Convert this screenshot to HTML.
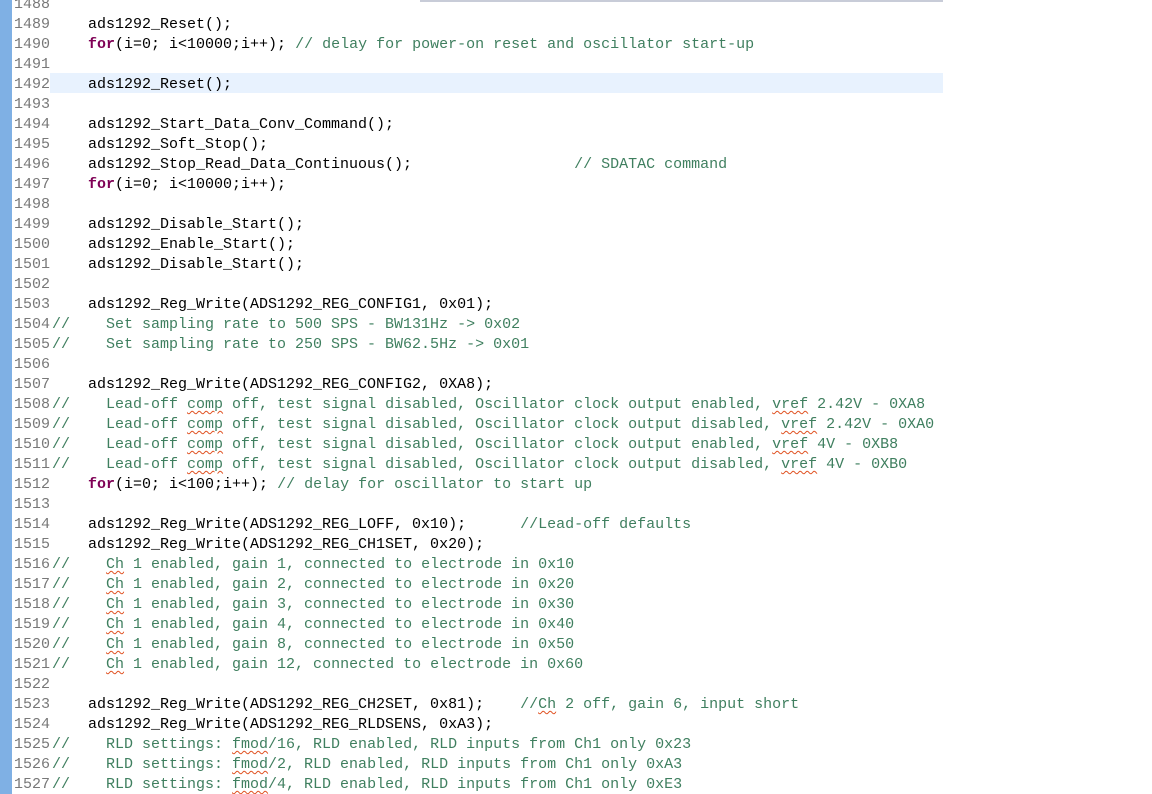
<!DOCTYPE html>
<html><head><meta charset="utf-8"><style>
html,body{margin:0;padding:0;background:#fff;width:1152px;height:794px;overflow:hidden;position:relative}
.bar{position:absolute;left:0;top:0;width:12px;height:794px;background:#7fb0e4}
.topl{position:absolute;left:420px;top:0;width:523px;height:2px;background:#c8ccd8}
.hl{position:absolute;left:50px;top:73px;width:893px;height:20px;background:#e8f2fe}
.l{position:absolute;left:0;height:20px;line-height:20px;font-family:"Liberation Mono",monospace;font-size:15px;white-space:pre;color:#000}
.n{position:absolute;left:12px;width:38px;text-align:right;color:#787878}
.c{position:absolute;left:52px}
.k{color:#7f0055;font-weight:bold}
.m{color:#3f7f5f}
.s{text-decoration:underline wavy #e05020;text-decoration-thickness:1px;text-underline-offset:2px}
</style></head><body>
<div class="bar"></div><div class="topl"></div><div class="hl"></div>
<div class="l" style="top:-5px"><span class="n">1488</span></div>
<div class="l" style="top:15px"><span class="n">1489</span><span class="c">    ads1292_Reset();</span></div>
<div class="l" style="top:35px"><span class="n">1490</span><span class="c">    <span class="k">for</span>(i=0; i&lt;10000;i++); <span class="m">// delay for power-on reset and oscillator start-up</span></span></div>
<div class="l" style="top:55px"><span class="n">1491</span></div>
<div class="l" style="top:75px"><span class="n">1492</span><span class="c">    ads1292_Reset();</span></div>
<div class="l" style="top:95px"><span class="n">1493</span></div>
<div class="l" style="top:115px"><span class="n">1494</span><span class="c">    ads1292_Start_Data_Conv_Command();</span></div>
<div class="l" style="top:135px"><span class="n">1495</span><span class="c">    ads1292_Soft_Stop();</span></div>
<div class="l" style="top:155px"><span class="n">1496</span><span class="c">    ads1292_Stop_Read_Data_Continuous();                  <span class="m">// SDATAC command</span></span></div>
<div class="l" style="top:175px"><span class="n">1497</span><span class="c">    <span class="k">for</span>(i=0; i&lt;10000;i++);</span></div>
<div class="l" style="top:195px"><span class="n">1498</span></div>
<div class="l" style="top:215px"><span class="n">1499</span><span class="c">    ads1292_Disable_Start();</span></div>
<div class="l" style="top:235px"><span class="n">1500</span><span class="c">    ads1292_Enable_Start();</span></div>
<div class="l" style="top:255px"><span class="n">1501</span><span class="c">    ads1292_Disable_Start();</span></div>
<div class="l" style="top:275px"><span class="n">1502</span></div>
<div class="l" style="top:295px"><span class="n">1503</span><span class="c">    ads1292_Reg_Write(ADS1292_REG_CONFIG1, 0x01);</span></div>
<div class="l" style="top:315px"><span class="n">1504</span><span class="c m">//    Set sampling rate to 500 SPS - BW131Hz -&gt; 0x02</span></div>
<div class="l" style="top:335px"><span class="n">1505</span><span class="c m">//    Set sampling rate to 250 SPS - BW62.5Hz -&gt; 0x01</span></div>
<div class="l" style="top:355px"><span class="n">1506</span></div>
<div class="l" style="top:375px"><span class="n">1507</span><span class="c">    ads1292_Reg_Write(ADS1292_REG_CONFIG2, 0XA8);</span></div>
<div class="l" style="top:395px"><span class="n">1508</span><span class="c m">//    Lead-off <span class="s">comp</span> off, test signal disabled, Oscillator clock output enabled, <span class="s">vref</span> 2.42V - 0XA8</span></div>
<div class="l" style="top:415px"><span class="n">1509</span><span class="c m">//    Lead-off <span class="s">comp</span> off, test signal disabled, Oscillator clock output disabled, <span class="s">vref</span> 2.42V - 0XA0</span></div>
<div class="l" style="top:435px"><span class="n">1510</span><span class="c m">//    Lead-off <span class="s">comp</span> off, test signal disabled, Oscillator clock output enabled, <span class="s">vref</span> 4V - 0XB8</span></div>
<div class="l" style="top:455px"><span class="n">1511</span><span class="c m">//    Lead-off <span class="s">comp</span> off, test signal disabled, Oscillator clock output disabled, <span class="s">vref</span> 4V - 0XB0</span></div>
<div class="l" style="top:475px"><span class="n">1512</span><span class="c">    <span class="k">for</span>(i=0; i&lt;100;i++); <span class="m">// delay for oscillator to start up</span></span></div>
<div class="l" style="top:495px"><span class="n">1513</span></div>
<div class="l" style="top:515px"><span class="n">1514</span><span class="c">    ads1292_Reg_Write(ADS1292_REG_LOFF, 0x10);      <span class="m">//Lead-off defaults</span></span></div>
<div class="l" style="top:535px"><span class="n">1515</span><span class="c">    ads1292_Reg_Write(ADS1292_REG_CH1SET, 0x20);</span></div>
<div class="l" style="top:555px"><span class="n">1516</span><span class="c m">//    <span class="s">Ch</span> 1 enabled, gain 1, connected to electrode in 0x10</span></div>
<div class="l" style="top:575px"><span class="n">1517</span><span class="c m">//    <span class="s">Ch</span> 1 enabled, gain 2, connected to electrode in 0x20</span></div>
<div class="l" style="top:595px"><span class="n">1518</span><span class="c m">//    <span class="s">Ch</span> 1 enabled, gain 3, connected to electrode in 0x30</span></div>
<div class="l" style="top:615px"><span class="n">1519</span><span class="c m">//    <span class="s">Ch</span> 1 enabled, gain 4, connected to electrode in 0x40</span></div>
<div class="l" style="top:635px"><span class="n">1520</span><span class="c m">//    <span class="s">Ch</span> 1 enabled, gain 8, connected to electrode in 0x50</span></div>
<div class="l" style="top:655px"><span class="n">1521</span><span class="c m">//    <span class="s">Ch</span> 1 enabled, gain 12, connected to electrode in 0x60</span></div>
<div class="l" style="top:675px"><span class="n">1522</span></div>
<div class="l" style="top:695px"><span class="n">1523</span><span class="c">    ads1292_Reg_Write(ADS1292_REG_CH2SET, 0x81);    <span class="m">//<span class="s">Ch</span> 2 off, gain 6, input short</span></span></div>
<div class="l" style="top:715px"><span class="n">1524</span><span class="c">    ads1292_Reg_Write(ADS1292_REG_RLDSENS, 0xA3);</span></div>
<div class="l" style="top:735px"><span class="n">1525</span><span class="c m">//    RLD settings: <span class="s">fmod</span>/16, RLD enabled, RLD inputs from Ch1 only 0x23</span></div>
<div class="l" style="top:755px"><span class="n">1526</span><span class="c m">//    RLD settings: <span class="s">fmod</span>/2, RLD enabled, RLD inputs from Ch1 only 0xA3</span></div>
<div class="l" style="top:775px"><span class="n">1527</span><span class="c m">//    RLD settings: <span class="s">fmod</span>/4, RLD enabled, RLD inputs from Ch1 only 0xE3</span></div>
</body></html>
